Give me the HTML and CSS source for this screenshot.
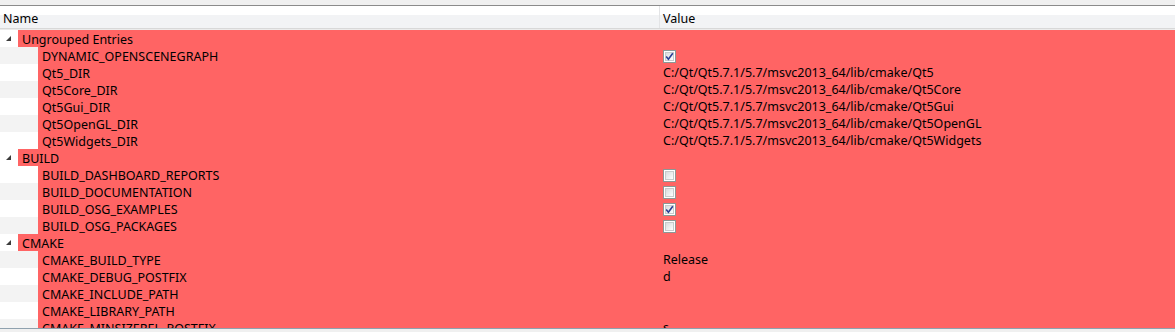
FILE: index.html
```html
<!DOCTYPE html>
<html>
<head>
<meta charset="utf-8">
<link rel="stylesheet" href="styles.css">
</head>
<body>
<div class="tree">
  <div class="topstrip"></div>
  <div class="header">
    <div class="hcell hname">Name</div>
    <div class="hcell hvalue">Value</div>
  </div>
  <div class="rows">
    <div class="row group"><div class="branch"><span class="arrow"></span></div><div class="cells"><div class="name">Ungrouped Entries</div><div class="value"></div></div></div>
    <div class="row child odd"><div class="indent"></div><div class="cells"><div class="name">DYNAMIC_OPENSCENEGRAPH</div><div class="value"><span class="cb checked"><svg viewBox="0 0 9 9" width="9" height="9"><path d="M1.2 4.6 L3.4 7.2 L7.8 1.2" fill="none" stroke="#2a3f95" stroke-width="1.6"/></svg></span></div></div></div>
    <div class="row child"><div class="indent"></div><div class="cells"><div class="name">Qt5_DIR</div><div class="value">C:/Qt/Qt5.7.1/5.7/msvc2013_64/lib/cmake/Qt5</div></div></div>
    <div class="row child odd"><div class="indent"></div><div class="cells"><div class="name">Qt5Core_DIR</div><div class="value">C:/Qt/Qt5.7.1/5.7/msvc2013_64/lib/cmake/Qt5Core</div></div></div>
    <div class="row child"><div class="indent"></div><div class="cells"><div class="name">Qt5Gui_DIR</div><div class="value">C:/Qt/Qt5.7.1/5.7/msvc2013_64/lib/cmake/Qt5Gui</div></div></div>
    <div class="row child odd"><div class="indent"></div><div class="cells"><div class="name">Qt5OpenGL_DIR</div><div class="value">C:/Qt/Qt5.7.1/5.7/msvc2013_64/lib/cmake/Qt5OpenGL</div></div></div>
    <div class="row child"><div class="indent"></div><div class="cells"><div class="name">Qt5Widgets_DIR</div><div class="value">C:/Qt/Qt5.7.1/5.7/msvc2013_64/lib/cmake/Qt5Widgets</div></div></div>
    <div class="row group"><div class="branch"><span class="arrow"></span></div><div class="cells"><div class="name">BUILD</div><div class="value"></div></div></div>
    <div class="row child"><div class="indent"></div><div class="cells"><div class="name">BUILD_DASHBOARD_REPORTS</div><div class="value"><span class="cb"></span></div></div></div>
    <div class="row child odd"><div class="indent"></div><div class="cells"><div class="name">BUILD_DOCUMENTATION</div><div class="value"><span class="cb"></span></div></div></div>
    <div class="row child"><div class="indent"></div><div class="cells"><div class="name">BUILD_OSG_EXAMPLES</div><div class="value"><span class="cb checked"><svg viewBox="0 0 9 9" width="9" height="9"><path d="M1.2 4.6 L3.4 7.2 L7.8 1.2" fill="none" stroke="#2a3f95" stroke-width="1.6"/></svg></span></div></div></div>
    <div class="row child odd"><div class="indent"></div><div class="cells"><div class="name">BUILD_OSG_PACKAGES</div><div class="value"><span class="cb"></span></div></div></div>
    <div class="row group"><div class="branch"><span class="arrow"></span></div><div class="cells"><div class="name">CMAKE</div><div class="value"></div></div></div>
    <div class="row child odd"><div class="indent"></div><div class="cells"><div class="name">CMAKE_BUILD_TYPE</div><div class="value">Release</div></div></div>
    <div class="row child"><div class="indent"></div><div class="cells"><div class="name">CMAKE_DEBUG_POSTFIX</div><div class="value">d</div></div></div>
    <div class="row child odd"><div class="indent"></div><div class="cells"><div class="name">CMAKE_INCLUDE_PATH</div><div class="value"></div></div></div>
    <div class="row child"><div class="indent"></div><div class="cells"><div class="name">CMAKE_LIBRARY_PATH</div><div class="value"></div></div></div>
    <div class="row child odd"><div class="indent"></div><div class="cells"><div class="name">CMAKE_MINSIZEREL_POSTFIX</div><div class="value">s</div></div></div>
  </div>
  <div class="bottom"></div>
</div>
</body>
</html>
```

FILE: styles.css
```css
html, body {
  margin: 0;
  padding: 0;
  background: #f0f0f0;
}
body {
  font-family: "Noto Sans", "Open Sans", sans-serif;
  font-size: 12.5px;
  color: #000;
}
.tree {
  width: 1175px;
  height: 332px;
  overflow: hidden;
  display: flex;
  flex-direction: column;
  background: #f0f0f0;
}
.topstrip {
  height: 5px;
  flex: none;
  background: #f0f0f0;
  border-bottom: 1px solid #8b8b8b;
}
.header {
  height: 22px;
  flex: none;
  display: flex;
  background: linear-gradient(#ffffff 0, #ffffff 9px, #f2f3f5 9px, #f2f3f5 100%);
  border-bottom: 1px solid #d8d8d8;
  box-shadow: 0 1px 0 #ebebeb;
  margin-bottom: 1px;
}
.hcell {
  line-height: 26px;
  height: 22px;
  padding-left: 3px;
  box-sizing: border-box;
}
.hname {
  width: 660px;
  border-right: 1px solid #e3e4e6;
}
.hvalue {
  flex: 1;
  padding-left: 3px;
}
.rows {
  height: 298px;
  flex: none;
  overflow: hidden;
  background: #ffffff;
  border-bottom: 1px solid #8fa1ae;
}
.row {
  display: flex;
  height: 17px;
}
.branch {
  width: 18px;
  flex: none;
  background: #ffffff;
  position: relative;
}
.arrow {
  position: absolute;
  left: 6px;
  top: 6px;
  width: 0;
  height: 0;
  border-left: 5px solid transparent;
  border-bottom: 5px solid #3c3c3c;
}
.indent {
  width: 38px;
  flex: none;
  background: #ffffff;
}
.row.odd .indent {
  background: #f3f3f3;
}
.cells {
  flex: 1;
  display: grid;
  background: #ff6464;
  white-space: nowrap;
}
.row.group .cells {
  grid-template-columns: 641px 1fr;
}
.row.child .cells {
  grid-template-columns: 621px 1fr;
}
.name, .value {
  padding-left: 4px;
  height: 17px;
  line-height: 20px;
}
.value {
  display: flex;
  align-items: center;
}
.cb {
  width: 13px;
  height: 13px;
  box-sizing: border-box;
  border: 1px solid #8c9896;
  background: #ffffff;
  padding: 1px;
  display: inline-block;
  position: relative;
  margin-top: 1px;
}
.cb::before {
  content: "";
  display: block;
  width: 100%;
  height: 100%;
  box-sizing: border-box;
  border: 1px solid #c7cbcd;
  background: linear-gradient(135deg, #d9dcde 0%, #f2f3f4 70%, #ffffff 100%);
}
.cb svg {
  position: absolute;
  left: 1px;
  top: 1px;
}
.bottom {
  flex: 1;
  background: #f0f0f0;
}
```
